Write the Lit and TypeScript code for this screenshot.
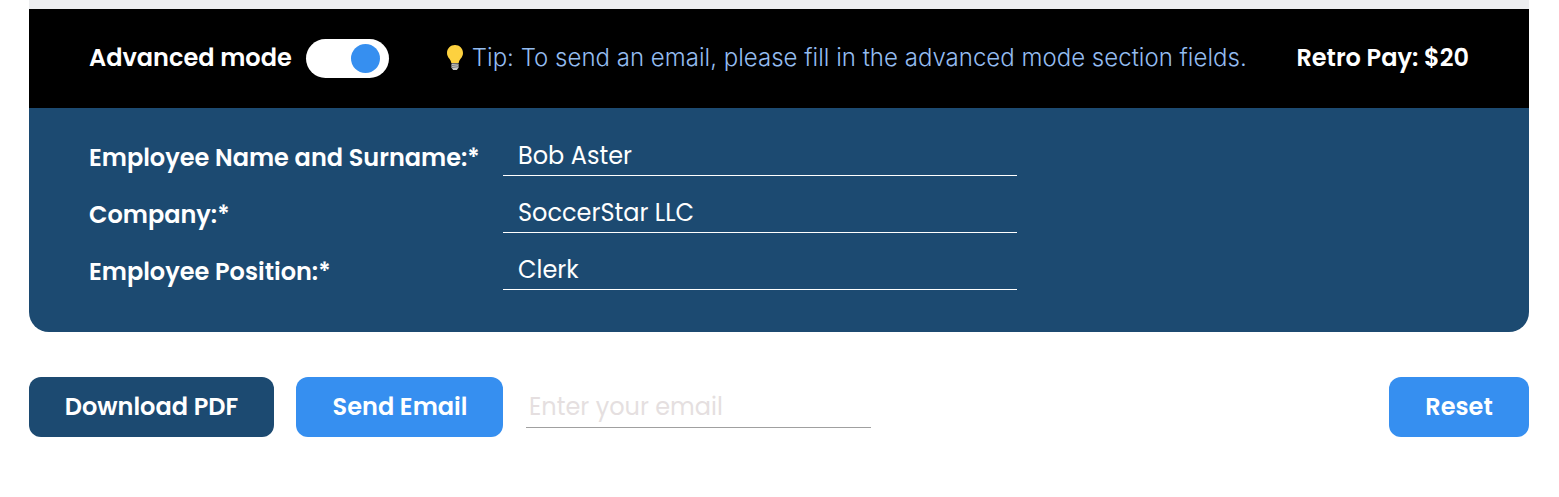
import { LitElement, html, css } from "lit";
import { customElement } from "lit/decorators.js";

@customElement("app-root")
export class AppRoot extends LitElement {
  static styles = css`
    :host { display: block; width: 1559px; height: 497px; background: #fff; font-family: Poppins, "Open Sans", "Noto Sans", sans-serif; overflow: hidden; }
    .wrap { padding: 0 30px 0 29px; }
    .top { height: 9px; background: #edeef0; }
    .bar { height: 99px; background: #000; color: #fff; display: flex; align-items: center; padding: 0 60px; box-sizing: border-box; }
    .label { font-size: 24px; font-weight: 600; margin-bottom: 3px; }
    .switch { width: 83px; height: 39px; border-radius: 20px; background: #fff; margin-left: 14px; display: flex; align-items: center; justify-content: flex-end; padding-right: 9px; box-sizing: border-box; }
    .knob { width: 29px; height: 29px; border-radius: 50%; background: #368ff0; }
    .tip { font-family: Inter, sans-serif; font-size: 24px; font-weight: 300; color: #94bcf0; margin-left: 54px; display: flex; align-items: center; gap: 7px; flex: 1; letter-spacing: 0.015px; }
    .tiptext { margin-bottom: 3px; }
    .bulb { width: 22px; height: 25px; flex: none; margin-bottom: 2px; }
    .retro { font-size: 24px; font-weight: 600; margin-bottom: 3px; }
    .panel { background: #1c4a71; color: #fff; border-radius: 0 0 20px 20px; padding: 20px 60px 33px; display: grid; grid-template-columns: 414px 514px; }
    .row { display: contents; }
    .k { font-size: 24px; font-weight: 600; height: 57px; display: flex; align-items: center; padding-top: 1px; box-sizing: border-box; }
    .v { font-size: 24px; height: 48px; border-bottom: 1px solid #fff; padding-left: 15px; padding-top: 7px; display: flex; align-items: center; box-sizing: border-box; margin-bottom: 9px; }
    .actions { display: flex; align-items: center; margin-top: 45px; }
    .btn { height: 60px; border-radius: 12px; color: #fff; font-size: 24px; font-weight: 600; display: flex; align-items: center; justify-content: center; box-sizing: border-box; padding-bottom: 2px; }
    .dark { background: #1c4a71; width: 245px; }
    .blue { background: #368ff0; width: 207px; margin-left: 22px; padding-left: 1px; }
    .email { width: 345px; height: 41px; margin-left: 23px; border-bottom: 1px solid #a0a0a0; color: #e5dfe0; font-size: 24px; padding-left: 3px; padding-bottom: 2px; box-sizing: border-box; display: flex; align-items: center; margin-top: 1px; }
    .reset { background: #368ff0; width: 140px; margin-left: auto; }
  `;
  render() {
    return html`<div class="wrap">
      <div class="top"></div>
      <div class="bar">
        <span class="label">Advanced mode</span>
        <div class="switch"><div class="knob"></div></div>
        <span class="tip"><svg class="bulb" viewBox="0 0 22 25"><path fill="#fdd13f" d="M12 0C7.500 0 4 3.400 4 7.900c0 2.400 1 4 2.200 5.600 1 1.300 1.800 2.600 2.100 4.500h7.400c.3-1.900 1.100-3.200 2.100-4.500C19 11.900 20 10.300 20 7.900 20 3.400 16.500 0 12 0z"/><path fill="#c9c9c9" d="M8.500 18.500h7v4.200L13.800 25h-3.600l-1.700-2.300z"/><path stroke="#777" stroke-width="1" d="M8.500 20.500l7-.8M8.500 22.500l7-.8"/></svg><span class="tiptext">Tip: To send an email, please fill in the advanced mode section fields.</span></span>
        <span class="retro">Retro Pay: $20</span>
      </div>
      <div class="panel">
        <div class="row"><div class="k">Employee Name and Surname:*</div><div class="v">Bob Aster</div></div>
        <div class="row"><div class="k">Company:*</div><div class="v">SoccerStar LLC</div></div>
        <div class="row"><div class="k">Employee Position:*</div><div class="v">Clerk</div></div>
      </div>
      <div class="actions">
        <div class="btn dark">Download PDF</div>
        <div class="btn blue">Send Email</div>
        <div class="email">Enter your email</div>
        <div class="btn reset">Reset</div>
      </div>
    </div>`;
  }
}
